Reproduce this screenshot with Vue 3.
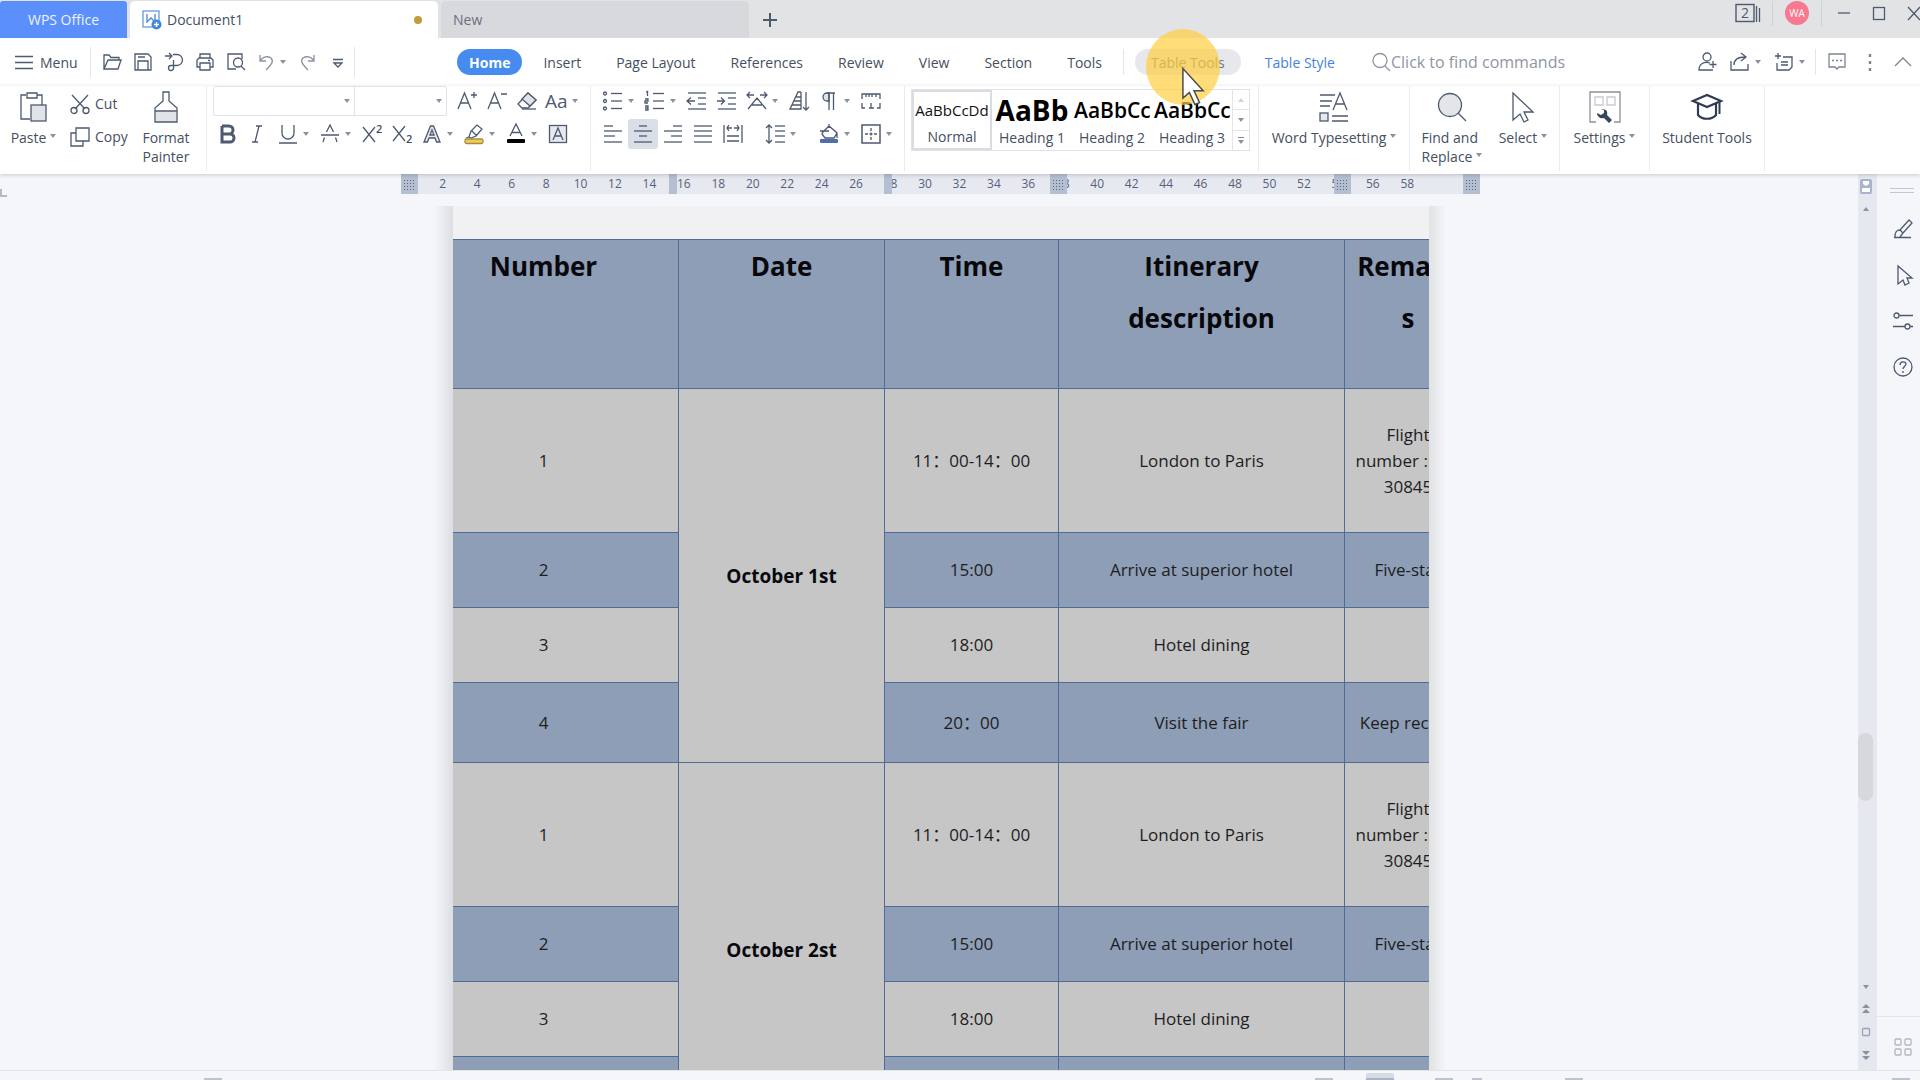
<template>
  <div class="app">
    <header class="tab-bar">
      <button class="wps-tab">WPS Office</button>
      <div class="doc-tab active">
        <svg class="doc-icon" viewBox="0 0 20 20" v-html="icons.doc"></svg>
        <span>Document1</span>
        <i class="unsaved"></i>
      </div>
      <div class="doc-tab"><span>New</span></div>
      <button class="add-tab" aria-label="New tab"><svg viewBox="0 0 20 20" v-html="icons.plus"></svg></button>
      <div class="window-actions">
        <button class="win-btn" aria-label="Windows"><svg class="win-count" viewBox="0 0 26 20" v-html="icons.windows"></svg></button>
        <span class="avatar-box"><span class="avatar">WA</span></span>
        <button v-for="name in ['minimize', 'maximize', 'close']" :key="name" class="win-btn" :aria-label="name">
          <svg viewBox="0 0 20 20" v-html="icons[name]"></svg>
        </button>
      </div>
    </header>

    <nav class="menu-bar">
      <button class="menu-btn">
        <svg viewBox="0 0 20 20" v-html="icons.menu"></svg>
        <span>Menu</span>
      </button>
      <div class="quick-access">
        <button v-for="item in quickAccess" :key="item.icon" class="quick" :class="{ wide: item.caret, faded: item.faded }" :aria-label="item.icon">
          <svg viewBox="0 0 20 20" v-html="icons[item.icon]"></svg>
          <i v-if="item.caret" class="caret"></i>
        </button>
      </div>
      <div class="tabs">
        <button v-for="tab in tabs" :key="tab" class="tab" :class="{ selected: tab === 'Home' }">{{ tab }}</button>
      </div>
      <div class="context-tabs">
        <div class="pointer-wrap">
          <button class="tab hovered">Table Tools</button>
          <i class="pointer-halo"></i>
          <svg class="pointer" viewBox="0 0 26 44" v-html="icons.pointer"></svg>
        </div>
        <button class="tab style-tab">Table Style</button>
      </div>
      <label class="search">
        <svg viewBox="0 0 20 20" v-html="icons.search"></svg>
        <input type="text" placeholder="Click to find commands" aria-label="Click to find commands" />
      </label>
      <div class="menu-right">
        <button class="side-action" aria-label="Invite"><svg viewBox="0 0 20 20" v-html="icons.person"></svg></button>
        <button class="side-action wide" aria-label="Share"><svg viewBox="0 0 20 20" v-html="icons.share"></svg><i class="caret"></i></button>
        <button class="side-action wide" aria-label="Notes"><svg viewBox="0 0 20 20" v-html="icons.note"></svg><i class="caret"></i></button>
        <span class="divider"></span>
        <button class="side-action grey" aria-label="Comments"><svg viewBox="0 0 20 20" v-html="icons.comment"></svg></button>
        <button class="side-action grey" aria-label="More"><svg viewBox="0 0 20 20" v-html="icons.dots"></svg></button>
        <button class="side-action grey" aria-label="Collapse"><svg viewBox="0 0 20 20" v-html="icons.chevron"></svg></button>
      </div>
    </nav>

    <section class="ribbon">
      <div class="group clipboard">
        <button class="big paste">
          <svg viewBox="0 0 32 32" v-html="icons.paste"></svg>
          <span>Paste<i class="caret"></i></span>
        </button>
        <div class="stack">
          <button class="small"><svg viewBox="0 0 20 20" v-html="icons.cut"></svg>Cut</button>
          <button class="small"><svg viewBox="0 0 20 20" v-html="icons.copy"></svg>Copy</button>
        </div>
        <button class="big painter">
          <svg viewBox="0 0 32 32" v-html="icons.painter"></svg>
          <span>Format<br />Painter</span>
        </button>
      </div>

      <div class="group font">
        <div class="tool-row">
          <div class="combos">
            <div class="combo name"><input type="text" aria-label="Font" /><i class="caret"></i></div>
            <div class="combo size"><input type="text" aria-label="Font size" /><i class="caret"></i></div>
          </div>
          <button v-for="t in fontTop" :key="t.icon" class="tool" :class="{ wide: t.caret }" :aria-label="t.icon">
            <svg viewBox="0 0 20 20" v-html="icons[t.icon]"></svg><i v-if="t.caret" class="caret"></i>
          </button>
        </div>
        <div class="tool-row">
          <button v-for="t in fontBottom" :key="t.icon" class="tool" :class="{ wide: t.caret }" :aria-label="t.icon">
            <svg viewBox="0 0 20 20" v-html="icons[t.icon]"></svg><i v-if="t.caret" class="caret"></i>
          </button>
        </div>
      </div>

      <div class="group paragraph">
        <div v-for="(row, i) in paragraphRows" :key="i" class="tool-row">
          <button v-for="t in row" :key="t.icon" class="tool" :class="{ wide: t.caret, on: t.on, spaced: t.spaced }" :aria-label="t.icon">
            <svg viewBox="0 0 20 20" v-html="icons[t.icon]"></svg><i v-if="t.caret" class="caret"></i>
          </button>
        </div>
      </div>

      <div class="group styles">
        <div class="gallery">
          <button v-for="s in styleList" :key="s.label" class="style" :class="s.cls">
            <span class="sample">{{ s.sample }}</span>
            <span class="label">{{ s.label }}</span>
          </button>
          <div class="gallery-nav">
            <button aria-label="Previous"><i class="caret up"></i></button>
            <button aria-label="Next"><i class="caret"></i></button>
            <button aria-label="All styles"><i class="bar"></i><i class="caret"></i></button>
          </div>
        </div>
      </div>

      <div class="group">
        <button class="big typeset">
          <svg viewBox="0 0 32 32" v-html="icons.typeset"></svg>
          <span>Word Typesetting<i class="caret"></i></span>
        </button>
      </div>
      <div class="group find-group">
        <button class="big find">
          <svg viewBox="0 0 32 32" v-html="icons.find"></svg>
          <span>Find and<br />Replace<i class="caret"></i></span>
        </button>
        <button class="big select">
          <svg viewBox="0 0 32 32" v-html="icons.select"></svg>
          <span>Select<i class="caret"></i></span>
        </button>
      </div>
      <div class="group">
        <button class="big settings">
          <svg viewBox="0 0 32 32" v-html="icons.settings"></svg>
          <span>Settings<i class="caret"></i></span>
        </button>
      </div>
      <div class="group">
        <button class="big student">
          <svg viewBox="0 0 32 32" v-html="icons.student"></svg>
          <span>Student Tools</span>
        </button>
      </div>
    </section>

    <main class="workspace">
      <div class="canvas">
        <i class="tab-stop"></i>
        <div class="ruler">
          <span v-for="n in 29" :key="n">{{ n * 2 }}</span>
          <i v-for="m in markers" :key="m.x" class="marker" :class="{ grip: m.grip }" :style="{ left: m.x + 'px' }"></i>
        </div>
        <div class="page-area">
          <div class="page">
            <table class="plan">
              <colgroup>
                <col class="c-number" /><col class="c-date" /><col class="c-time" /><col class="c-desc" /><col class="c-remark" />
              </colgroup>
              <thead>
                <tr>
                  <th>Number</th>
                  <th>Date</th>
                  <th>Time</th>
                  <th>Itinerary<br />description</th>
                  <th>Remark<br />s</th>
                </tr>
              </thead>
              <tbody v-for="day in days" :key="day">
                <tr v-for="(row, i) in rows" :key="i" :class="[row.cls, { blue: i % 2 }]">
                  <td>{{ i + 1 }}</td>
                  <td v-if="i === 0" rowspan="4" class="day">{{ day }}</td>
                  <td>{{ row.time }}</td>
                  <td>{{ row.text }}</td>
                  <td class="remark">{{ row.remark }}</td>
                </tr>
              </tbody>
            </table>
          </div>
        </div>
      </div>
      <div class="scrollbar">
        <svg class="ruler-toggle" viewBox="0 0 12 15" v-html="icons.rulerToggle"></svg>
        <i class="caret up"></i>
        <div class="track"><i class="thumb"></i></div>
        <i class="caret"></i>
        <svg class="jump" viewBox="0 0 10 60" v-html="icons.jump"></svg>
      </div>
      <aside class="side-panel">
        <i class="handle"></i>
        <button v-for="name in ['pen', 'arrow', 'sliders', 'help']" :key="name" :aria-label="name">
          <svg viewBox="0 0 20 20" v-html="icons[name]"></svg>
        </button>
        <button class="apps" aria-label="apps"><svg viewBox="0 0 20 20" v-html="icons.apps"></svg></button>
      </aside>
    </main>

    <footer class="status-bar">
      <i class="chip left"></i>
      <div class="views">
        <i class="chip"></i>
        <i class="view-on"></i>
        <i class="chip"></i>
        <i class="chip round"></i>
        <i class="chip zoom"></i>
      </div>
      <i class="chip full"></i>
    </footer>
  </div>
</template>

<script setup>
const tabs = ['Home', 'Insert', 'Page Layout', 'References', 'Review', 'View', 'Section', 'Tools'];

const quickAccess = [
  { icon: 'open' },
  { icon: 'save' },
  { icon: 'export' },
  { icon: 'print' },
  { icon: 'preview' },
  { icon: 'undo', caret: true, faded: true },
  { icon: 'redo', faded: true },
  { icon: 'more' }
];

const fontTop = [{ icon: 'grow' }, { icon: 'shrink' }, { icon: 'eraser' }, { icon: 'case', caret: true }];
const fontBottom = [
  { icon: 'bold' },
  { icon: 'italic' },
  { icon: 'underline', caret: true },
  { icon: 'strike', caret: true },
  { icon: 'superscript' },
  { icon: 'subscript' },
  { icon: 'effects', caret: true },
  { icon: 'highlight', caret: true },
  { icon: 'color', caret: true },
  { icon: 'shade' }
];

const paragraphRows = [
  [
    { icon: 'bullets', caret: true },
    { icon: 'numbers', caret: true },
    { icon: 'outdent' },
    { icon: 'indent' },
    { icon: 'scale', caret: true },
    { icon: 'sort' },
    { icon: 'pilcrow', caret: true },
    { icon: 'tabstops' }
  ],
  [
    { icon: 'left' },
    { icon: 'center', on: true },
    { icon: 'right' },
    { icon: 'justify' },
    { icon: 'distribute' },
    { icon: 'spacing', caret: true, spaced: true },
    { icon: 'fill', caret: true, spaced: true },
    { icon: 'borders', caret: true }
  ]
];

const styleList = [
  { sample: 'AaBbCcDd', label: 'Normal', cls: 'current' },
  { sample: 'AaBb', label: 'Heading 1', cls: 'h1' },
  { sample: 'AaBbCc', label: 'Heading 2', cls: 'h2' },
  { sample: 'AaBbCc', label: 'Heading 3', cls: 'h2' }
];

const markers = [
  { x: 0, grip: true },
  { x: 268 },
  { x: 483 },
  { x: 649, grip: true },
  { x: 933, grip: true },
  { x: 1062, grip: true }
];

const days = ['October 1st', 'October 2st'];
const rows = [
  { time: '11：00-14：00', text: 'London to Paris', remark: 'Flight\nnumber :kl02\n30845', cls: 'tall' },
  { time: '15:00', text: 'Arrive at superior hotel', remark: 'Five-star' },
  { time: '18:00', text: 'Hotel dining', remark: '' },
  { time: '20：00', text: 'Visit the fair', remark: 'Keep record', cls: 'mid' }
];

const lines = (list) => list.map(([x1, x2, y]) => `<path d="M${x1} ${y}H${x2}"/>`).join('');

const icons = {
  doc: '<rect x="1" y="1" width="16" height="16" fill="#fff" stroke="#6b9ad6"/><path d="M5 4v8l4-4 4 4V4" stroke="#4a86d8"/><circle cx="14.5" cy="14.5" r="5" fill="#3f86de" stroke="none"/><path d="M14.5 12v5M12 14.5h5" stroke="#fff" stroke-width="1.4"/>',
  plus: '<path d="M10 3v14M3 10h14" stroke="#4d5a70" stroke-width="2"/>',
  windows: '<rect x="1" y="1.5" width="18" height="17" stroke-width="1.4"/><path d="M21.5 3v16M24.5 5v14"/><text x="6" y="15" font-size="14" fill="#4d5a70" stroke="none">2</text>',
  minimize: '<path d="M4 10h12"/>',
  maximize: '<rect x="4.5" y="4.5" width="11" height="12"/>',
  close: '<path d="M4 4l12 13M16 4L4 17"/>',
  menu: '<path d="M1 4.5h18M1 10.5h18M1 16.5h18"/>',
  open: '<path d="M2 17V3h5l2 2.5h8V8M2 17h14l3-9H6z"/>',
  save: '<path d="M2 2h13l3 3v13H2zM5 18V9h10v9M5 5h7"/>',
  export: '<path d="M1 4h6M5 1l3 3-3 3M9 2.5h4a5 5 0 0 1 0 11H7a2.5 2.5 0 1 0 2.5 2.5V8"/>',
  print: '<path d="M5 6V2h10v4M5 15H2V8l2-2h12l2 2v7h-3M5 11h10v7H5zM13 8.5h2"/>',
  preview: '<path d="M16 7V2H2v15h8"/><circle cx="12" cy="10.5" r="4.5"/><path d="M15 14l4 4"/>',
  undo: '<path d="M3 3v6h6M3 9c3-5 8-5 11-3 3 3 1 6-5 12"/>',
  redo: '<path d="M17 3v6h-6M17 9c-3-5-8-5-11-3-3 3-1 6 5 12"/>',
  more: '<path d="M5 7.5h10M6 11l4 4 4-4z"/>',
  pointer: '<path d="M1 2v32l7-6 6 13 5-2-6-13h10z" fill="#fff" stroke="#4c4a45" stroke-width="1.6"/>',
  search: '<circle cx="9" cy="8.5" r="7"/><path d="M14 14l5 5"/>',
  person: '<circle cx="10" cy="5" r="4"/><path d="M13 11c-6-2-11 1-11 7h14M16 9v7M12.5 12.5h7"/>',
  share: '<path d="M1 9v9h17v-6M4 13c0-5 4-8 11-8M11 1l5 4-5 4"/>',
  note: '<path d="M1 4h6M4 1v6M9 5h9v10l-3 3H3v-7M7 10h7M7 13h7"/>',
  comment: '<path d="M2 2h16v13h-6l-2 2-2-2H2z"/><path d="M5 8.5h2M9 8.5h2M13 8.5h2" stroke-width="1.6"/>',
  dots: '<path d="M10 2v3M10 9v3M10 16v3" stroke-width="2.4"/>',
  chevron: '<path d="M2 14l8-8 8 8"/>',
  paste: '<path d="M8 4H3v24h9M19 4h5v10M9 2h10v5H9z"/><rect x="13" y="14" width="15" height="16" fill="#e0e3e8"/>',
  cut: '<path d="M2 1l13 14M18 1L5 15"/><circle cx="4" cy="16.5" r="3"/><circle cx="16" cy="16.5" r="3"/>',
  copy: '<path d="M6 6H1v13h12v-5M6 1h13v13H6z"/>',
  painter: '<path d="M5.5 21h21v9.5h-21z" fill="#e0e3e8" stroke="none"/><path d="M13 1h6v9l8 7v14H5V17l8-7zM5 20h22"/>',
  grow: '<path d="M1 18L7.5 2 14 18M3.5 12h8M14 4h6M17 1v6"/>',
  shrink: '<path d="M1 18L7.5 2 14 18M3.5 12h8M14 3h6"/>',
  eraser: '<path d="M11 2l8 7-8 8H5l-4-4z"/><path d="M11 2l8 7-6 6-8-7z" fill="#dfe3ea"/><path d="M5 18h14"/>',
  case: '<text x="-2" y="17" font-size="19" fill="#4d5a70" stroke="none">Aa</text>',
  bold: '<path d="M4 2v16h8a4 4 0 0 0 0-8H4M4 2h7a4 4 0 0 1 0 8" stroke-width="3"/>',
  italic: '<path d="M8 2h6M4 18h6M11 2L7 18"/>',
  underline: '<path d="M4 1v8a6 6 0 0 0 12 0V1M1 19h18"/>',
  strike: '<path d="M6.5 8L10 1l3.5 7M1 11h18M4.5 13.5L3 18M15.5 13.5L17 18"/>',
  superscript: '<path d="M1 3l12 15M13 3L1 18"/><text x="14" y="9" font-size="11" font-weight="600" fill="#3f4b60" stroke="none">2</text>',
  subscript: '<path d="M1 2l12 15M13 2L1 17"/><text x="14" y="19" font-size="11" font-weight="600" fill="#3f4b60" stroke="none">2</text>',
  effects: '<path d="M2 18L8.5 2h3L18 18h-3.5l-1.5-4H7l-1.5 4zM8 11h4l-2-5z" fill="#e6e9ee"/>',
  highlight: '<path d="M5 13l2-6 6-6 5 4-6 7-5 2zM8 7l5 5M5 13l-3 1"/><rect x="1" y="15" width="18" height="4.5" rx="1.5" fill="#f1cd4d" stroke="#a58d45"/>',
  color: '<path d="M4 12L10 0l6 12M6 8.5h8"/><rect x="1" y="15" width="18" height="4" rx="1" fill="#000" stroke="none"/>',
  shade: '<rect x="1.5" y="1.5" width="17" height="17" fill="#e6e9ee"/><path d="M5 16l5-12 5 12M7 12h6"/>',
  bullets: '<circle cx="2" cy="2.5" r="1.5"/><circle cx="2" cy="10" r="1.5"/><circle cx="2" cy="17.5" r="1.5"/>' + lines([[8, 19, 2.5], [8, 19, 10], [8, 19, 17.5]]),
  numbers: '<path d="M1 1l1.5-.5V5M0 8h3v2H0v2h3M0 15h3v4H0M0 17h3"/>' + lines([[8, 19, 2.5], [8, 19, 10], [8, 19, 17.5]]),
  outdent: lines([[1, 19, 2], [11, 19, 7], [11, 19, 13], [1, 19, 18]]) + '<path d="M8 10H0M4 6.5L0 10l4 3.5"/>',
  indent: lines([[1, 19, 2], [11, 19, 7], [11, 19, 13], [1, 19, 18]]) + '<path d="M0 10h7M4 6.5L7.5 10 4 13.5"/>',
  scale: '<path d="M0 4h7M3 1L0 4l3 3M13 4h7M17 1l3 3-3 3M1 18l9-11 9 11M5 14h10"/>',
  sort: '<path d="M12 1v17H1L9 1h3M7 6h5M5 10h7M3 14h9M17 1v18M14 16l3 3 3-3"/>',
  pilcrow: '<path d="M10 10H8a4 4 0 0 1 0-8h2z" fill="#dfe3ea"/><path d="M8 2h8M10 2v17M14.5 2v17"/>',
  tabstops: '<path d="M1 8V3h18v5M5 3v3M8 3v3M11 3v3M15 3v3M1 12v5h3M8 17h5M10 12v5M16 17h3v-5"/>',
  left: lines([[1, 10, 2], [1, 19, 7], [1, 12, 12], [1, 19, 18]]),
  center: lines([[6, 14, 2], [1, 19, 7], [6, 14, 12], [1, 19, 18]]),
  right: lines([[10, 19, 2], [1, 19, 7], [8, 19, 12], [1, 19, 18]]),
  justify: lines([[1, 19, 2], [1, 19, 7], [1, 19, 12], [1, 19, 18]]),
  distribute: '<path d="M1 1v18M19 1v18M4 4h5M11 4h5M6 1L4 4l2 3M14 1l2 3-2 3M4 12h12M4 17h12"/>',
  spacing: '<path d="M4 1v18M1 4l3-3 3 3M1 16l3 3 3-3"/>' + lines([[10, 20, 2], [10, 20, 7], [10, 20, 12], [10, 20, 18]]),
  fill: '<path d="M4 8l6-6 8 7-3 5H6L3 10zM10 0v4M1 7h9M18 9v5"/><rect x="1" y="15" width="18" height="4" rx="1" fill="#4d70a8" stroke="none"/>',
  borders: '<rect x="1" y="1" width="18" height="18" stroke-width="1.5"/><path d="M4 10h12M10 4v12" stroke-dasharray="3 1.5"/>',
  typeset: '<path d="M2 4h15M2 10h12M2 15h10M14 30h16M14 25h16M15 19L22 2l7 17M17 13h10"/><rect x="2" y="22" width="8" height="8" fill="#e6e9ee"/>',
  find: '<circle cx="14" cy="14" r="11.5" fill="#e4e5e8"/><path d="M22 22l8 8"/>',
  select: '<path d="M6 2v27l7-6 4 8 4-2-4-8h9z"/>',
  settings: '<path d="M7 31H1V1h30v30h-6" stroke="#8c9099"/><path d="M6 6h8v8H6zM18 6h8v8h-8z" stroke="#c8cacd"/><path d="M12 18l3 1v3l-3 2-4-2c0 4 4 6 7 5l5 5 3-3-5-5c1-4-1-6-6-6z" fill="#37445a" stroke="none"/>',
  student: '<path d="M2 10l14-6 14 6-14 6zM7 13v11c4 5 14 5 18 0V13" stroke="#2f3b52" stroke-width="2.2"/><path d="M28.5 11v12" stroke="#2f3b52" stroke-width="2"/>',
  rulerToggle: '<rect x="0" y="0" width="12" height="15" rx="2" fill="#a9b4c8" stroke="none"/><path d="M3 2h6v3L6 7 3 5zM2 9h8v4H2z" fill="#fff" stroke="none"/>',
  jump: '<path d="M1 7l4-4 4 4zM1 12l4-4 4 4zM1 50h8l-4 4zM1 55h8l-4 4z" fill="#8791a3" stroke="none"/><rect x="1.5" y="27.5" width="7" height="7" rx="1"/>',
  pen: '<path d="M1 18.5h17M2 18c0-6 2-7 5-7l3 3-3 4M7 11L16 1l3 3-9 10"/>',
  arrow: '<path d="M5 1v18l5-4 2 5 4-2-2-5h5z"/>',
  sliders: '<circle cx="3.5" cy="4.5" r="2.5"/><path d="M6 4.5h14M0 15.5h12M17 15.5h3"/><circle cx="14.5" cy="15.5" r="2.5"/>',
  help: '<circle cx="10" cy="10" r="9"/><path d="M7 8c0-4 6-4 6-1 0 2-3 3-3 5M10 14v2"/>',
  apps: '<rect x="2" y="2" width="6" height="6" rx="1"/><rect x="12" y="2" width="6" height="6" rx="1"/><rect x="2" y="12" width="6" height="6" rx="1"/><rect x="12" y="12" width="6" height="6" rx="1"/>'
};
</script>

<style>
body {
  margin: 0;
  overflow: hidden;
}
</style>

<style scoped>
.app {
  height: 100vh;
  display: flex;
  flex-direction: column;
  overflow: hidden;
  background: #f4f6f9;
  color: #454f61;
  font-family: "Open Sans", "Noto Sans CJK SC", sans-serif;
  font-size: 14px;
}
button {
  border: none;
  background: none;
  padding: 0;
  margin: 0;
  color: inherit;
  font: inherit;
  white-space: nowrap;
}
input {
  border: none;
  outline: none;
  background: none;
  padding: 0;
  min-width: 0;
  font: inherit;
  color: inherit;
}
svg {
  width: 20px;
  height: 20px;
  flex: none;
  fill: none;
  stroke: #4d5a70;
  stroke-width: 1.3;
  overflow: visible;
}
.caret {
  width: 0;
  height: 0;
  flex: none;
  border: 3px solid transparent;
  border-top: 4px solid #8a92a0;
  border-bottom: none;
}
.caret.up {
  border-top: none;
  border-bottom: 4px solid #8a92a0;
}

.tab-bar {
  height: 38px;
  flex: none;
  display: flex;
  align-items: flex-end;
  background: #e2e3e5;
}
.wps-tab {
  width: 127px;
  height: 37px;
  margin-right: 3px;
  border-radius: 3px 3px 0 0;
  background: #5b8ffb;
  color: #eef3ff;
}
.doc-tab {
  width: 308px;
  height: 37px;
  margin-right: 3px;
  padding: 0 16px 0 12px;
  box-sizing: border-box;
  display: flex;
  align-items: center;
  gap: 5px;
  border-radius: 5px 5px 0 0;
  background: #d8d9dd;
  color: #69707e;
}
.doc-tab.active {
  background: #fff;
  color: #454f61;
}
.unsaved {
  width: 8px;
  height: 8px;
  margin-left: auto;
  border-radius: 50%;
  background: #c49a3a;
}
.add-tab {
  height: 37px;
  padding-left: 8px;
  display: flex;
  align-items: center;
}
.window-actions {
  height: 26px;
  margin-left: auto;
  align-self: flex-start;
  display: flex;
  align-items: center;
}
.win-btn {
  width: 35px;
  height: 26px;
  display: flex;
  align-items: center;
  justify-content: center;
}
.win-btn:last-child {
  margin-right: -11px;
}
.win-count {
  width: 26px;
}
.avatar-box {
  height: 25px;
  margin: 0 4px 0 7px;
  padding: 0 12px;
  border-left: 1px solid #d0d1d5;
  border-right: 1px solid #d0d1d5;
}
.avatar {
  display: block;
  width: 24px;
  height: 24px;
  border-radius: 50%;
  background: #f7788f;
  color: #fff;
  font-size: 10px;
  line-height: 24px;
  text-align: center;
}

.menu-bar {
  height: 48px;
  flex: none;
  display: flex;
  align-items: center;
  background: #fff;
}
.menu-btn {
  height: 30px;
  width: 91px;
  padding-left: 14px;
  box-sizing: border-box;
  display: flex;
  align-items: center;
  gap: 6px;
  border-right: 1px solid #e3e5e9;
}
.quick-access {
  height: 30px;
  width: 264px;
  padding-left: 5px;
  box-sizing: border-box;
  display: flex;
  align-items: center;
  border-right: 1px solid #e3e5e9;
}
.quick {
  width: 31px;
  flex: none;
  padding: 0 6px;
  display: flex;
  align-items: center;
  gap: 3px;
}
.quick.wide {
  width: 40px;
}
.faded svg {
  stroke: #8c93a0;
}
.tabs {
  margin-left: 102px;
  display: flex;
  gap: 1px;
}
.tab {
  height: 26px;
  padding: 0 17px;
  border-radius: 13px;
}
.tab.selected {
  padding: 0 12px;
  margin-right: 3px;
  background: #468cf0;
  color: #fff;
  font-weight: 700;
}
.context-tabs {
  margin-left: 4px;
  padding-left: 11px;
  display: flex;
  border-left: 1px solid #e3e5e9;
}
.pointer-wrap {
  position: relative;
}
.tab.hovered {
  padding: 0 16px;
  background: #e6e8ec;
  color: #70747e;
}
.tab.style-tab {
  margin-left: 7px;
  color: #4583d8;
}
.pointer-halo {
  position: absolute;
  left: 11px;
  top: -20px;
  width: 74px;
  height: 76px;
  border-radius: 50%;
  background: rgba(255, 206, 64, 0.7);
  z-index: 2;
}
.pointer {
  position: absolute;
  left: 47px;
  top: 17px;
  width: 24px;
  height: 42px;
  z-index: 3;
}
.search {
  margin-left: 19px;
  display: flex;
  align-items: center;
  font-size: 16px;
}
.search svg {
  stroke: #8f96a3;
}
.search input {
  width: 190px;
}
.search input::placeholder {
  color: #8f96a3;
  opacity: 1;
}
.menu-right {
  margin-left: auto;
  padding-right: 1px;
  display: flex;
  align-items: center;
}
.side-action {
  width: 32px;
  display: flex;
  align-items: center;
  justify-content: center;
  gap: 5px;
}
.side-action.wide {
  width: 44px;
}
.side-action.grey {
  width: 33px;
}
.side-action.grey svg {
  stroke: #7d8593;
}
.divider {
  width: 1px;
  height: 26px;
  margin: 0 4px;
  background: #e3e5e9;
}

.ribbon {
  height: 88px;
  flex: none;
  display: flex;
  background: #fff;
  box-shadow: 0 1px 4px rgba(0, 0, 0, 0.18);
  position: relative;
  z-index: 1;
}
.group {
  height: 85px;
  box-sizing: border-box;
  display: flex;
  border-right: 1px solid #e9ebee;
}
.big {
  padding-top: 5px;
  display: flex;
  flex-direction: column;
  align-items: center;
  gap: 5px;
  line-height: 19px;
}
.big svg {
  width: 32px;
  height: 32px;
}
.big .caret {
  display: inline-block;
  margin-left: 4px;
  vertical-align: 5px;
}
.clipboard {
  width: 207px;
}
.paste {
  width: 67px;
}
.stack {
  width: 70px;
  padding: 1px 0 0 3px;
  display: flex;
  flex-direction: column;
  gap: 3px;
}
.small {
  height: 30px;
  padding-top: 3px;
  display: flex;
  align-items: center;
  gap: 5px;
}
.painter {
  width: 52px;
}
.font,
.paragraph {
  flex-direction: column;
  gap: 3px;
  padding-left: 6px;
}
.font {
  width: 384px;
}
.paragraph {
  width: 314px;
  padding-left: 7px;
}
.tool-row {
  height: 30px;
  display: flex;
}
.tool {
  width: 30px;
  height: 30px;
  flex: none;
  padding: 0 5px;
  display: flex;
  align-items: center;
  gap: 5px;
  border-radius: 3px;
}
.tool.wide {
  width: 42px;
}
.tool.spaced {
  margin-left: 12px;
}
.tool.on {
  background: #d9dee7;
}
.combos {
  display: flex;
  margin-right: 5px;
  border: 1px solid #dfe2e6;
  border-radius: 2px;
  box-sizing: border-box;
}
.combo {
  box-sizing: border-box;
  display: flex;
  align-items: center;
  padding-right: 4px;
}
.combo input {
  flex: 1;
  width: 0;
}
.combo.name {
  width: 141px;
  border-right: 1px solid #dfe2e6;
}
.combo.size {
  width: 91px;
}
.styles {
  width: 354px;
  padding: 3px 8px 0 6px;
}
.gallery {
  flex: 1;
  height: 62px;
  box-sizing: border-box;
  display: flex;
  border: 1px solid #dfe2e6;
}
.style {
  width: 80px;
  height: 60px;
  padding: 0 2px 1px;
  box-sizing: border-box;
  display: flex;
  flex-direction: column;
  justify-content: flex-end;
}
.style.current {
  border: 2px solid #d9dce1;
  padding: 0;
}
.current .sample {
  font-size: 15px;
}
.sample {
  height: 36px;
  line-height: 36px;
  overflow: hidden;
  color: #111;
}
.h1 .sample {
  font-size: 28px;
  line-height: 38px;
  font-weight: 700;
  color: #000;
}
.h2 .sample {
  font-size: 21px;
  line-height: 38px;
  font-weight: 600;
  color: #000;
  text-align: left;
}
.label {
  line-height: 22px;
  text-align: center;
}
.gallery-nav {
  flex: 1;
  display: flex;
  flex-direction: column;
  border-left: 1px solid #e3e5e9;
}
.gallery-nav button {
  flex: 1;
  display: flex;
  flex-direction: column;
  align-items: center;
  justify-content: center;
  gap: 2px;
  border-bottom: 1px solid #e3e5e9;
}
.gallery-nav button:last-child {
  border-bottom: none;
}
.gallery-nav .up {
  border-bottom-color: #d0d4da;
}
.bar {
  width: 6px;
  height: 1px;
  background: #7d8593;
}
.typeset {
  width: 150px;
}
.find-group {
  padding-right: 7px;
}
.find {
  width: 84px;
  text-align: left;
}
.select {
  width: 58px;
}
.settings {
  width: 89px;
}
.student {
  width: 114px;
}

.workspace {
  flex: 1;
  min-height: 0;
  display: flex;
}
.canvas {
  flex: 1;
  min-width: 0;
  padding-left: 22px;
  display: flex;
  flex-direction: column;
  align-items: center;
  position: relative;
  overflow: hidden;
}
.tab-stop {
  position: absolute;
  left: 0;
  top: 15px;
  width: 5px;
  height: 6px;
  border: 2px solid #b5bac2;
  border-top: none;
  border-right: none;
}
.ruler {
  width: 1079px;
  height: 20px;
  flex: none;
  padding: 0 55px 0 25px;
  box-sizing: border-box;
  display: grid;
  grid-template-columns: repeat(29, 1fr);
  position: relative;
  background: #e6e9f0;
  color: #566179;
  font-size: 12px;
  line-height: 20px;
  text-align: center;
}
.marker {
  position: absolute;
  top: 0;
  width: 8px;
  height: 20px;
  background: #b4bfd1;
}
.marker.grip {
  width: 17px;
}
.marker.grip::after {
  content: "";
  position: absolute;
  left: 3px;
  top: 6px;
  width: 10px;
  height: 10px;
  background: repeating-linear-gradient(90deg, transparent 0 1px, #b4bfd1 1px 3px),
    repeating-linear-gradient(0deg, #56637c 0 1px, transparent 1px 3px);
}
.page-area {
  flex: 1;
  min-height: 0;
  margin-top: 12px;
  padding: 0 17px 0 19px;
  display: flex;
  background: linear-gradient(90deg, #f4f6f9 0, #dcdee1 19px, #e0e2e4 995px, #f4f6f9 1012px);
}
.page {
  width: 976px;
  overflow: hidden;
  background: #f1f1f3;
}
.plan {
  width: 1063px;
  margin: 33px 0 0 -45px;
  table-layout: fixed;
  border-collapse: collapse;
  color: #1d1d1f;
  font-size: 17px;
  line-height: 26px;
  text-align: center;
}
.c-number { width: 270px; }
.c-date { width: 206px; }
.c-time { width: 174px; }
.c-desc { width: 286px; }
.c-remark { width: 127px; }
th,
td {
  padding: 0;
  height: 75px;
  box-sizing: border-box;
  border: 1px solid #4f6c94;
  background: #c6c6c6;
}
th {
  height: 149px;
  vertical-align: top;
  background: #8e9eb6;
  color: #08080c;
  font-size: 26px;
  line-height: 52px;
}
.tall td {
  height: 144px;
}
.mid td {
  height: 80px;
}
.blue td {
  background: #8e9eb6;
}
.day {
  color: #08080c;
  font-size: 19px;
  font-weight: 700;
}
.remark {
  white-space: pre-line;
}

.scrollbar {
  width: 19px;
  padding: 5px 3px 9px 0;
  box-sizing: border-box;
  display: flex;
  flex-direction: column;
  align-items: center;
  background: #e5e8ee;
}
.ruler-toggle {
  width: 12px;
  height: 15px;
  margin-bottom: 13px;
}
.track {
  flex: 1;
  width: 100%;
  padding-top: 522px;
  box-sizing: border-box;
}
.thumb {
  display: block;
  width: 15px;
  height: 68px;
  border-radius: 8px;
  background: #d6d8dc;
}
.jump {
  width: 10px;
  height: 60px;
  margin-top: 12px;
  stroke: #98a2b3;
}
.side-panel {
  width: 43px;
  padding-top: 14px;
  box-sizing: border-box;
  display: flex;
  flex-direction: column;
  align-items: center;
}
.handle {
  width: 24px;
  height: 3px;
  margin: 0 0 13px 7px;
  border-top: 1px solid #c4c8ce;
  border-bottom: 1px solid #c4c8ce;
}
.side-panel button {
  height: 46px;
  padding-left: 8px;
  display: flex;
  align-items: center;
}
.side-panel .apps {
  width: 100%;
  height: 54px;
  margin-top: auto;
  padding: 7px 0 0 16px;
  box-sizing: border-box;
  border-top: 1px solid #e3e5e9;
}
.apps svg {
  stroke: #b3b6bb;
}

.status-bar {
  height: 10px;
  flex: none;
  padding-right: 10px;
  box-sizing: border-box;
  display: flex;
  align-items: flex-end;
  border-top: 1px solid #e3e5e9;
  overflow: hidden;
}
.chip {
  width: 18px;
  height: 2px;
  background: #bfc4cc;
}
.chip.left {
  margin-left: 204px;
}
.views {
  margin-left: auto;
  margin-right: 309px;
  display: flex;
  align-items: flex-end;
  gap: 33px;
}
.view-on {
  width: 28px;
  height: 7px;
  margin-right: 8px;
  border-radius: 2px 2px 0 0;
  background: linear-gradient(#d6dbe4, #d6dbe4) 0 0 / 28px 5px no-repeat, #a9b3c3;
}
.chip.round {
  width: 10px;
  margin-left: -14px;
}
.chip.zoom {
  margin-left: 50px;
}
</style>
